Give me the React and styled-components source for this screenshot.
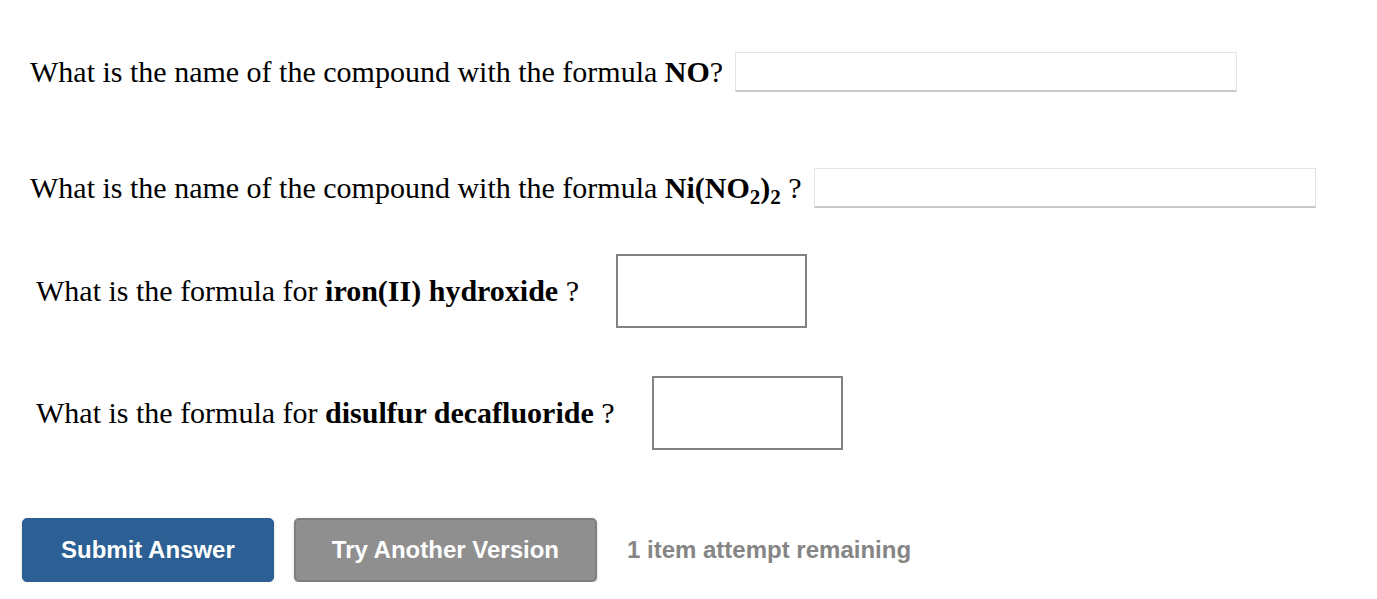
import React from "react";
import styled, { createGlobalStyle } from "styled-components";

const GlobalStyle = createGlobalStyle`
  body {
    margin: 0;
    background: #fff;
  }
`;

const questions = [
  {
    kind: "name",
    after: 76,
    text: (
      <>
        What is the name of the compound with the formula <b>NO</b>?
      </>
    ),
  },
  {
    kind: "name",
    after: 46,
    text: (
      <>
        What is the name of the compound with the formula{" "}
        <b>
          Ni(NO<sub>2</sub>)<sub>2</sub>
        </b>{" "}
        ?
      </>
    ),
  },
  {
    kind: "formula",
    after: 48,
    text: (
      <>
        What is the formula for <b>iron(II) hydroxide</b> ?
      </>
    ),
  },
  {
    kind: "formula",
    after: 68,
    text: (
      <>
        What is the formula for <b>disulfur decafluoride</b> ?
      </>
    ),
  },
];

export default function App() {
  return (
    <>
      <GlobalStyle />
      <Page>
        {questions.map((q, index) => (
          <QuestionRow key={index} kind={q.kind} after={q.after}>
            <Prompt>{q.text}</Prompt>
            {q.kind === "name" ? <NameInput type="text" /> : <FormulaBox />}
          </QuestionRow>
        ))}
        <Actions>
          <Button variant="primary" type="button">
            Submit Answer
          </Button>
          <Button variant="secondary" type="button">
            Try Another Version
          </Button>
          <Attempts>1 item attempt remaining</Attempts>
        </Actions>
      </Page>
    </>
  );
}

const Page = styled.div`
  display: flex;
  flex-direction: column;
  padding: 52px 0 0 22px;
`;

const QuestionRow = styled.div`
  display: flex;
  align-items: center;
  padding-left: ${(props) => (props.kind === "name" ? "8px" : "14px")};
  margin-bottom: ${(props) => props.after}px;
  gap: ${(props) => (props.kind === "name" ? "12px" : "37px")};
`;

const Prompt = styled.div`
  font-family: "Liberation Serif", "Times New Roman", serif;
  font-size: 30px;
  line-height: 36px;
  color: #000;
  white-space: nowrap;
  & b {
    font-weight: bold;
  }
  & sub {
    font-size: 21px;
    vertical-align: -6px;
    line-height: 0;
  }
`;

const NameInput = styled.input`
  box-sizing: border-box;
  width: 502px;
  height: 40px;
  border: 1px solid #e4e4e4;
  border-bottom: 2px solid #c9c9c9;
  background: #fff;
  padding: 0 8px;
  font-size: 20px;
  outline: none;
`;

const FormulaBox = styled.div`
  box-sizing: border-box;
  width: 191px;
  height: 74px;
  border: 2px solid #828282;
  background: #fff;
`;

const Actions = styled.div`
  display: flex;
  align-items: center;
  gap: 20px;
`;

const Button = styled.button`
  box-sizing: border-box;
  height: 64px;
  padding: 0 ${(props) => (props.variant === "primary" ? "38px" : "36px")};
  border-radius: 5px;
  font-family: "Liberation Sans", Arial, sans-serif;
  font-weight: bold;
  font-size: 24px;
  color: #fff;
  cursor: pointer;
  border: ${(props) =>
    props.variant === "primary" ? "1px solid #2a5d90" : "2px solid #7e7e7e"};
  background: ${(props) => (props.variant === "primary" ? "#2c5f93" : "#8f8f8f")};
  box-shadow: 0 1px 3px rgba(0, 0, 0, 0.18);
`;

const Attempts = styled.span`
  margin-left: 10px;
  font-family: "Liberation Sans", Arial, sans-serif;
  font-weight: bold;
  font-size: 24px;
  color: #858585;
`;
